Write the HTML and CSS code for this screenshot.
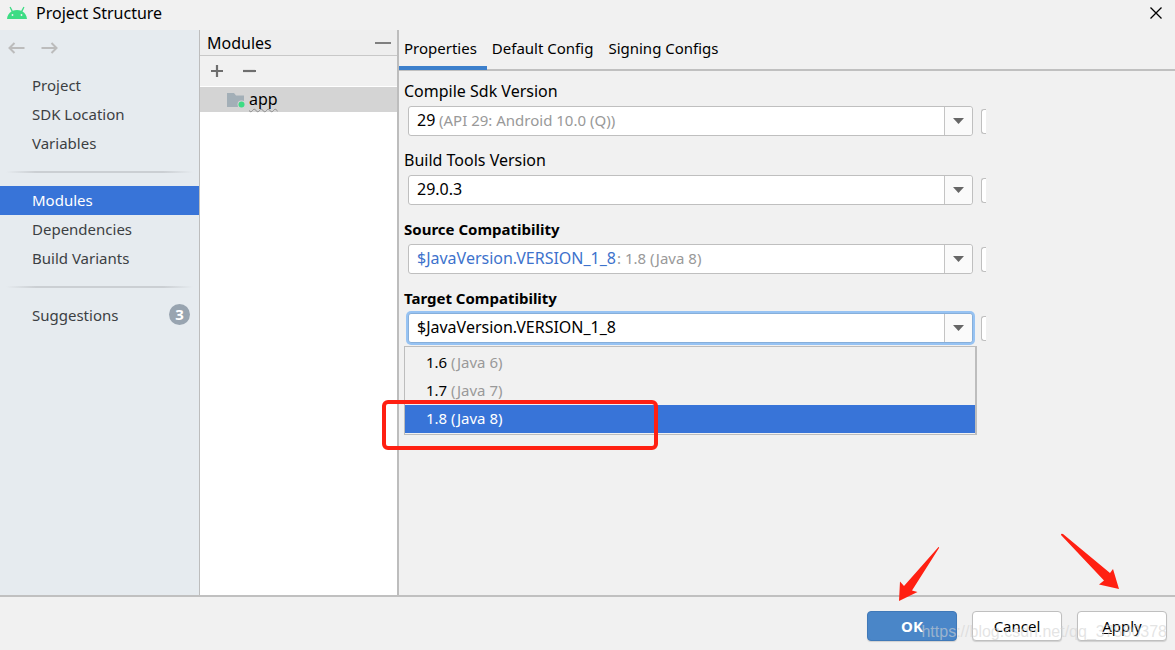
FILE: index.html
```html
<!DOCTYPE html>
<html lang="en">
<head>
<meta charset="utf-8">
<title>Project Structure</title>
<link rel="stylesheet" href="styles.css">
</head>
<body>
<div class="window">
  <header class="titlebar">
    <svg class="logo" width="20" height="14" viewBox="0 0 20 14" aria-hidden="true"><path d="M0 13C.3 9.600 2 7 4.500 5.500L2.500 1.300 3.600.7 5.800 4.700C8.300 3.700 11.700 3.700 14.200 4.700L16.400.7l1.100.6-2 4.200C18 7 19.700 9.600 20 13z" fill="#3ddc84"/><circle cx="5.500" cy="9" r=".9" fill="#f1f1f1"/><circle cx="14.500" cy="9" r=".9" fill="#f1f1f1"/></svg>
    <h1 class="title">Project Structure</h1>
    <button class="icon-button" aria-label="Close"><svg width="12" height="12" viewBox="0 0 12 12"><path d="M.5.5l11 11M11.500.5l-11 11" stroke="#000" stroke-width="1.300"/></svg></button>
  </header>

  <main class="body">
    <nav class="sidebar" aria-label="Sections">
      <div class="history">
        <button class="icon-button" aria-label="Back"><svg width="17" height="12" viewBox="0 0 17 12"><path d="M16.500 6H1.500M6.500 1l-5 5 5 5" fill="none" stroke="#bcbcbc" stroke-width="2"/></svg></button>
        <button class="icon-button" aria-label="Forward"><svg width="17" height="12" viewBox="0 0 17 12"><path d="M.5 6h15M10.500 1l5 5-5 5" fill="none" stroke="#bcbcbc" stroke-width="2"/></svg></button>
      </div>
      <a class="nav-item" href="#project">Project</a>
      <a class="nav-item" href="#sdk">SDK Location</a>
      <a class="nav-item" href="#variables">Variables</a>
      <hr class="separator">
      <a class="nav-item selected" href="#modules" aria-current="page">Modules</a>
      <a class="nav-item" href="#dependencies">Dependencies</a>
      <a class="nav-item" href="#variants">Build Variants</a>
      <hr class="separator">
      <a class="nav-item" href="#suggestions">Suggestions <span class="count">3</span></a>
    </nav>

    <section class="modules">
      <div class="modules-head">
        <h2 class="modules-title">Modules</h2>
        <button class="icon-button" aria-label="Hide"><svg width="16" height="2" viewBox="0 0 16 2"><path d="M0 1h16" stroke="#7f7f7f" stroke-width="2"/></svg></button>
      </div>
      <div class="toolbar">
        <button class="icon-button" aria-label="Add"><svg width="14" height="14" viewBox="0 0 14 14"><path d="M1 7h12M7 1v12" stroke="#6e6e6e" stroke-width="2.200"/></svg></button>
        <button class="icon-button" aria-label="Remove"><svg width="14" height="14" viewBox="0 0 14 14"><path d="M1 7h13" stroke="#6e6e6e" stroke-width="2.200"/></svg></button>
      </div>
      <button class="module">
        <svg width="20" height="16" viewBox="0 0 20 16" aria-hidden="true"><path d="M0 1h7l2 2.500h8V15H0z" fill="#a3afb7"/><circle cx="14.500" cy="12.500" r="4" fill="#d4d4d4"/><circle cx="14.500" cy="12.500" r="3" fill="#3ddc84"/></svg>
        <span class="module-name">app</span>
      </button>
    </section>

    <section class="content">
      <div class="tabs" role="tablist">
        <button class="tab active" role="tab" aria-selected="true">Properties</button>
        <button class="tab" role="tab">Default Config</button>
        <button class="tab" role="tab">Signing Configs</button>
      </div>
      <form class="form">
        <div class="field">
          <label class="label" for="sdk-version">Compile Sdk Version</label>
          <div class="row">
            <div class="combo"><input class="value tiny" id="sdk-version" value="29"><span class="hint">(API 29: Android 10.0 (Q))</span><button class="drop" type="button" aria-label="Show options"><svg width="11" height="6" viewBox="0 0 11 6"><path d="M0 0h11L5.500 6z" fill="#666"/></svg></button></div>
            <span class="stub"></span>
          </div>
        </div>
        <div class="field">
          <label class="label" for="tools-version">Build Tools Version</label>
          <div class="row">
            <div class="combo"><input class="value" id="tools-version" value="29.0.3"><button class="drop" type="button" aria-label="Show options"><svg width="11" height="6" viewBox="0 0 11 6"><path d="M0 0h11L5.500 6z" fill="#666"/></svg></button></div>
            <span class="stub"></span>
          </div>
        </div>
        <div class="field">
          <label class="label changed" for="source">Source Compatibility</label>
          <div class="row">
            <div class="combo"><input class="value reference" id="source" value="$JavaVersion.VERSION_1_8"><span class="hint">: 1.8 (Java 8)</span><button class="drop" type="button" aria-label="Show options"><svg width="11" height="6" viewBox="0 0 11 6"><path d="M0 0h11L5.500 6z" fill="#666"/></svg></button></div>
            <span class="stub"></span>
          </div>
        </div>
        <div class="field">
          <label class="label changed" for="target">Target Compatibility</label>
          <div class="row">
            <div class="combo focused"><input class="value" id="target" value="$JavaVersion.VERSION_1_8"><button class="drop" type="button" aria-label="Show options"><svg width="11" height="6" viewBox="0 0 11 6"><path d="M0 0h11L5.500 6z" fill="#666"/></svg></button>
              <ul class="popup" role="listbox" aria-label="Target Compatibility">
                <li class="option" role="option">1.6 <span class="option-hint">(Java 6)</span></li>
                <li class="option" role="option">1.7 <span class="option-hint">(Java 7)</span></li>
                <li class="option chosen" role="option" aria-selected="true">1.8 (Java 8)</li>
              </ul>
              <div class="highlight"></div>
            </div>
            <span class="stub"></span>
          </div>
        </div>
      </form>
    </section>
  </main>

  <footer class="footer">
    <div class="action">
      <button class="button primary">OK</button>
      <svg class="arrow arrow-ok" width="42" height="56" viewBox="0 0 42 56" aria-hidden="true"><path d="M40.500 1Q41.500 1 41 2L14 44.500l5.500 1.500L1 55 2 35.500l4 4.500z" fill="#ff2012"/></svg>
    </div>
    <button class="button">Cancel</button>
    <div class="action">
      <button class="button"><u>A</u>pply</button>
      <svg class="arrow arrow-apply" width="60" height="58" viewBox="0 0 60 58" aria-hidden="true"><path d="M1 2Q1 0 3 1L50 40l3-4 6 20L39 51.500l5-4z" fill="#ff2012"/></svg>
    </div>
    <span class="watermark">https://blog.csdn.net/qq_37580378</span>
  </footer>
</div>
</body>
</html>
```
FILE: styles.css
```css
* { box-sizing: border-box; }
body {
  margin: 0;
  font: 16px/28px "Noto Sans", sans-serif;
  color: #000;
  background: #f1f1f1;
}
button, input { font: inherit; color: inherit; padding: 0; border: 0; background: none; }
svg { display: block; }
.window { display: flex; flex-direction: column; min-height: 100vh; overflow: hidden; }

.titlebar { display: flex; align-items: center; gap: 9px; height: 30px; padding: 0 13px 4px 7px; }
.title { flex: 1; margin: 0; font-size: 16px; font-weight: 400; }

.body { display: flex; flex: 1; border-bottom: 2px solid #c0c0c0; }

.sidebar { flex: none; width: 200px; background: #e6ebef; border-right: 1px solid #bdbdbd; }
.history { display: flex; gap: 16px; padding: 12px 8px 17px; }
.nav-item {
  display: flex;
  align-items: center;
  justify-content: space-between;
  height: 29px;
  padding: 0 9px 2px 32px;
  color: #3c3f43;
  font-size: 15px;
  text-decoration: none;
}
.nav-item.selected { background: #3874d8; color: #fff; }
.separator {
  height: 2px;
  margin: 13px 6px;
  border: 0;
  background: linear-gradient(to right, transparent, #cbcfd3 30px, #cbcfd3 calc(100% - 30px), transparent);
}
.count {
  width: 21px;
  height: 21px;
  border-radius: 50%;
  background: #98a4b0;
  color: #fff;
  font-weight: 700;
  line-height: 21px;
  text-align: center;
}

.modules { flex: none; width: 199px; background: #fff; border-right: 2px solid #bdbdbd; }
.modules-head {
  display: flex;
  align-items: center;
  justify-content: space-between;
  height: 26px;
  padding: 0 6px 0 7px;
  background: #eee;
  border-bottom: 1px solid #c8c8c8;
}
.modules-title { margin: 0; font-size: 16px; font-weight: 400; }
.toolbar { display: flex; align-items: center; gap: 18px; height: 30px; padding: 0 10px; background: #f1f1f1; }
.module {
  display: flex;
  align-items: center;
  gap: 2px;
  width: 100%;
  height: 25px;
  margin-top: 1px;
  padding-left: 27px;
  background: #d4d4d4;
}
.module-name { line-height: 20px; padding-bottom: 1px; text-decoration: underline wavy #8b8b8b 1px; text-underline-offset: 3px; text-decoration-skip-ink: none; }

.content { flex: 1; }
.tabs { display: flex; height: 41px; border-bottom: 2px solid #c0c0c0; }
.tab { height: 40px; padding: 0 10px 4px 5px; font-size: 15px; }
.tab.active { border-bottom: 4px solid #3d80cc; padding-bottom: 0; }
.form { display: flex; flex-direction: column; gap: 11px; padding: 7px 5px; }
.label { display: block; height: 28px; line-height: 26px; }
.label.changed { font-size: 15px; font-weight: 700; }
.row { display: flex; align-items: center; gap: 8px; padding-left: 4px; }
.combo {
  position: relative;
  display: flex;
  flex: 0 1 565px;
  height: 30px;
  border: 1px solid #bfbfbf;
  border-radius: 3px;
  background: #fff;
}
.value { flex: 1; min-width: 0; padding: 0 0 2px 8px; outline: 0; }
.value.tiny { flex: none; width: 30px; }
.value.reference { flex: none; width: 208px; color: #3d72cc; }
.hint { flex: 1; color: #999; font-size: 15px; line-height: 26px; }
.drop {
  display: flex;
  align-items: center;
  justify-content: center;
  width: 28px;
  border-left: 1px solid #c4c4c4;
  border-radius: 0 3px 3px 0;
  background: #fafafa;
}
.combo.focused { border-color: #87afda; box-shadow: 0 0 0 2px #97c3f3; }
.stub { width: 5px; height: 25px; border: 1px solid #bfbfbf; border-right: 0; border-radius: 3px 0 0 3px; background: #fff; }

.popup {
  position: absolute;
  z-index: 1;
  top: 32px;
  left: -5px;
  right: -5px;
  margin: 0;
  padding: 2px 0 1px;
  list-style: none;
  background: #f1f1f1;
  border: 1px solid #bdbdbd;
  border-right-width: 2px;
  font-size: 15px;
}
.option { padding-left: 21px; height: 28px; line-height: 27px; }
.option-hint { color: #999; }
.option.chosen { background: #3874d8; color: #fff; }
.highlight {
  position: absolute;
  z-index: 2;
  top: 86px;
  left: -27px;
  width: 276px;
  height: 50px;
  border: 4px solid #ff2012;
  border-radius: 6px;
}

.footer { position: relative; display: flex; justify-content: flex-end; gap: 15px; padding: 14px 8px 9px; }
.action { position: relative; }
.button {
  display: block;
  width: 90px;
  height: 30px;
  border: 1px solid #bfbfbf;
  border-radius: 4px;
  background: #fff;
  box-shadow: 0 1px 1px #d0d0d0;
  font-size: 15px;
}
.button.primary { background: #4a86c8; border-color: #4079b8; color: #fff; font-weight: 700; }
.arrow { position: absolute; z-index: 3; }
.arrow-ok { left: 31px; top: -65px; }
.arrow-apply { left: -17px; top: -78px; }
.watermark {
  position: absolute;
  right: 8px;
  bottom: 4px;
  color: rgba(210, 210, 210, 0.6);
  font: 16px/28px "Liberation Sans", sans-serif;
  pointer-events: none;
}
```
